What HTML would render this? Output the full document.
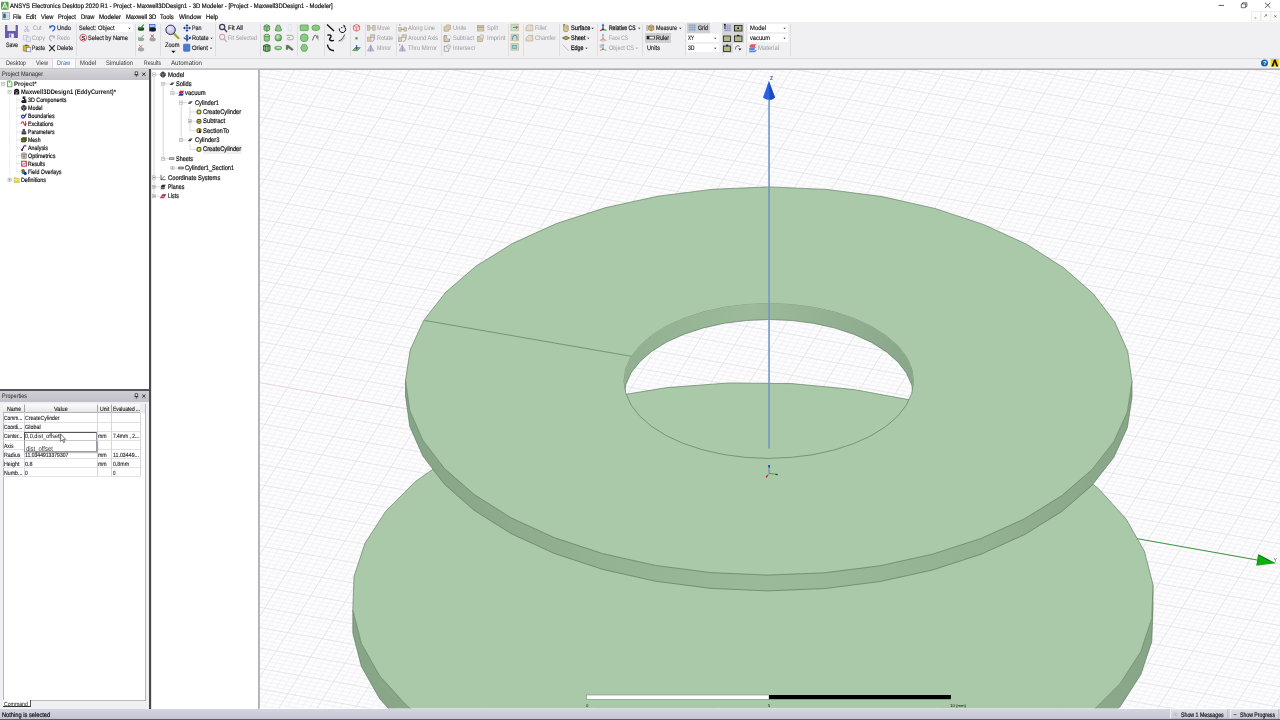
<!DOCTYPE html>
<html lang="en"><head><meta charset="utf-8"><title>ANSYS Electronics Desktop 2020 R1 - Project - Maxwell3DDesign1 - 3D Modeler</title>
<style>
html,body{margin:0;padding:0;}
body{width:1280px;height:720px;overflow:hidden;background:#fff;position:relative;font-family:"Liberation Sans", sans-serif;}
.t{position:absolute;transform-origin:0 50%;white-space:nowrap;text-rendering:geometricPrecision;line-height:12px;height:12px;font-family:"Liberation Sans", sans-serif;}
.b{position:absolute;box-sizing:border-box;}
svg{position:absolute;left:0;top:0;overflow:visible;}
</style></head><body>
<div class="b" style="left:0px;top:0px;width:1280px;height:21.5px;background:#ffffff;"></div>
<div class="b" style="left:0px;top:21.5px;width:1280px;height:37px;background:#f0f0f2;"></div>
<div class="b" style="left:0px;top:58px;width:1280px;height:0.8px;background:#dcdce0;"></div>
<div class="b" style="left:0px;top:58.8px;width:1280px;height:9.4px;background:#f1f1f3;"></div>
<div class="b" style="left:52px;top:58.5px;width:23.5px;height:9.5px;background:#fafafc;border-left:0.6px solid #dadade;border-right:0.6px solid #dadade;"></div>
<div class="b" style="left:0px;top:68px;width:1280px;height:1px;background:#c9c9cd;"></div>
<div class="b" style="left:76px;top:24px;width:0.7px;height:32px;background:#dedee2;"></div>
<div class="b" style="left:96.5px;top:23.5px;width:36px;height:8.8px;background:#fff;"></div>
<div class="b" style="left:134.5px;top:24px;width:0.7px;height:32px;background:#dedee2;"></div>
<div class="b" style="left:160px;top:24px;width:0.7px;height:32px;background:#dedee2;"></div>
<div class="b" style="left:215px;top:24px;width:0.7px;height:32px;background:#dedee2;"></div>
<div class="b" style="left:259.5px;top:24px;width:0.7px;height:32px;background:#dedee2;"></div>
<div class="b" style="left:297px;top:24px;width:0.7px;height:32px;background:#dedee2;"></div>
<div class="b" style="left:323.5px;top:24px;width:0.7px;height:32px;background:#dedee2;"></div>
<div class="b" style="left:350px;top:24px;width:0.7px;height:32px;background:#dedee2;"></div>
<div class="b" style="left:364.5px;top:24px;width:0.7px;height:32px;background:#dedee2;"></div>
<div class="b" style="left:396px;top:24px;width:0.7px;height:32px;background:#dedee2;"></div>
<div class="b" style="left:440.5px;top:24px;width:0.7px;height:32px;background:#dedee2;"></div>
<div class="b" style="left:507.5px;top:24px;width:0.7px;height:32px;background:#dedee2;"></div>
<div class="b" style="left:523px;top:24px;width:0.7px;height:32px;background:#dedee2;"></div>
<div class="b" style="left:559px;top:24px;width:0.7px;height:32px;background:#dedee2;"></div>
<div class="b" style="left:597px;top:24px;width:0.7px;height:32px;background:#dedee2;"></div>
<div class="b" style="left:642px;top:24px;width:0.7px;height:32px;background:#dedee2;"></div>
<div class="b" style="left:645px;top:33px;width:25.5px;height:10px;background:#cfcfd3;"></div>
<div class="b" style="left:684.5px;top:24px;width:0.7px;height:32px;background:#dedee2;"></div>
<div class="b" style="left:687px;top:23px;width:22.5px;height:10px;background:#cfcfd3;"></div>
<div class="b" style="left:687px;top:33.5px;width:31.5px;height:8.8px;background:#fff;"></div>
<div class="b" style="left:687px;top:43.5px;width:31.5px;height:8.8px;background:#fff;"></div>
<div class="b" style="left:721.5px;top:24px;width:0.7px;height:32px;background:#dedee2;"></div>
<div class="b" style="left:722px;top:23px;width:22.4px;height:19.6px;background:#d6d6da;"></div>
<div class="b" style="left:722px;top:42.6px;width:11px;height:10px;background:#d6d6da;"></div>
<div class="b" style="left:746px;top:24px;width:0.7px;height:32px;background:#dedee2;"></div>
<div class="b" style="left:748px;top:23.5px;width:39.5px;height:8.8px;background:#fff;"></div>
<div class="b" style="left:748px;top:33.5px;width:39.5px;height:8.8px;background:#fff;"></div>
<div class="b" style="left:790px;top:24px;width:0.7px;height:32px;background:#dedee2;"></div>
<div class="b" style="left:0px;top:69px;width:149px;height:10.5px;background:linear-gradient(#d6d6da,#c2c2c8);"></div>
<div class="b" style="left:0px;top:79.5px;width:149px;height:309.5px;background:#fff;"></div>
<div class="b" style="left:149px;top:69px;width:1.8px;height:640px;background:#4a4a4e;"></div>
<div class="b" style="left:150.8px;top:69px;width:1.2px;height:640px;background:#e4e4e8;"></div>
<div class="b" style="left:0px;top:389px;width:149px;height:1.6px;background:#55555a;"></div>
<div class="b" style="left:0px;top:390.6px;width:149px;height:11px;background:linear-gradient(#cfcfd5,#bfbfc7);"></div>
<div class="b" style="left:0px;top:401.6px;width:149px;height:307.4px;background:#f0f0f2;"></div>
<div class="b" style="left:3px;top:403.5px;width:143px;height:297px;background:#fff;border:0.7px solid #b8b8bc;"></div>
<div class="b" style="left:152px;top:69px;width:106px;height:640px;background:#fff;"></div>
<div class="b" style="left:257.6px;top:69px;width:1.4px;height:640px;background:#b4b4b8;"></div>
<div class="b" style="left:151.5px;top:68.8px;width:107px;height:1.7px;background:linear-gradient(#b4b4b8,#d8d8dc);"></div>
<div class="b" style="left:0px;top:708.5px;width:1280px;height:11.5px;background:linear-gradient(#d5d5e1,#c2c2d2);"></div>
<div class="b" style="left:0px;top:719px;width:1280px;height:1px;background:#5a5a66;"></div>
<div class="b" style="left:1170.4px;top:709.4px;width:57.4px;height:9.6px;background:linear-gradient(#dcdce6,#cdcddb);border:0.6px solid #bcbcca;border-left-color:#eeeef4;border-top-color:#e4e4ee;"></div>
<div class="b" style="left:1229.8px;top:709.4px;width:49.6px;height:9.6px;background:linear-gradient(#dcdce6,#cdcddb);border:0.6px solid #bcbcca;border-left-color:#eeeef4;border-top-color:#e4e4ee;"></div>
<div class="b" style="left:0px;top:700.5px;width:149px;height:8.2px;background:#f0f0f2;"></div>
<div class="b" style="left:2.6px;top:700.2px;width:28.2px;height:6.8px;background:#fff;border-bottom:0.8px solid #333;border-right:0.8px solid #555;"></div>
<div class="b" style="left:202.6px;top:144.78px;width:39.4px;height:8.8px;background:#f0f0f3;"></div>
<div class="b" style="left:3.4px;top:404.1px;width:137px;height:8.8px;background:linear-gradient(#fcfcfd,#e6e6ea);border-bottom:0.7px solid #b0b0b6;"></div>
<div class="b" style="left:3.4px;top:421.67px;width:137px;height:0.6px;background:#e2e2e6;"></div>
<div class="b" style="left:3.4px;top:430.74px;width:137px;height:0.6px;background:#e2e2e6;"></div>
<div class="b" style="left:3.4px;top:439.81px;width:137px;height:0.6px;background:#e2e2e6;"></div>
<div class="b" style="left:3.4px;top:448.88000000000005px;width:137px;height:0.6px;background:#e2e2e6;"></div>
<div class="b" style="left:3.4px;top:457.95000000000005px;width:137px;height:0.6px;background:#e2e2e6;"></div>
<div class="b" style="left:3.4px;top:467.02000000000004px;width:137px;height:0.6px;background:#e2e2e6;"></div>
<div class="b" style="left:3.4px;top:476.09000000000003px;width:137px;height:0.6px;background:#e2e2e6;"></div>
<div class="b" style="left:24.1px;top:404.1px;width:0.6px;height:72.29px;background:#d6d6da;"></div>
<div class="b" style="left:96.8px;top:404.1px;width:0.6px;height:72.29px;background:#d6d6da;"></div>
<div class="b" style="left:111.3px;top:404.1px;width:0.6px;height:72.29px;background:#d6d6da;"></div>
<div class="b" style="left:140.1px;top:404.1px;width:0.6px;height:72.29px;background:#d6d6da;"></div>
<div class="b" style="left:23.900000000000002px;top:404.6px;width:0.9px;height:7.800000000000001px;background:#a4a4aa;"></div>
<div class="b" style="left:96.6px;top:404.6px;width:0.9px;height:7.800000000000001px;background:#a4a4aa;"></div>
<div class="b" style="left:111.1px;top:404.6px;width:0.9px;height:7.800000000000001px;background:#a4a4aa;"></div>
<div class="b" style="left:140.4px;top:404.1px;width:5px;height:8.8px;background:#ececf0;"></div>
<div class="b" style="left:24.2px;top:432.1px;width:72.8px;height:8.5px;background:#fff;border:0.8px solid #55555a;border-right-color:#9a9aa0;border-bottom-color:#9a9aa0;"></div>
<div class="b" style="left:24.2px;top:440.4px;width:72.8px;height:11.8px;background:#fff;border:0.7px solid #9a9aa0;border-top:0.6px solid #c8c8cc;box-shadow:0.6px 0.8px 1.2px rgba(0,0,0,.3);"></div>
<div style="position:absolute;left:0;top:0;width:1280px;height:720px;will-change:transform;"><svg width="1280" height="720" viewBox="0 0 1280 720"><defs><clipPath id="vp"><rect x="259" y="69" width="1021" height="639.6"/></clipPath><clipPath id="hc"><path d="M631.2 356.8L640.0 345.6L651.9 335.3L666.7 326.1L684.1 318.3L703.5 312.0L724.5 307.3L746.6 304.6L769.3 303.6L791.9 304.6L814.0 307.5L834.9 312.2L854.3 318.6L871.5 326.5L886.2 335.8L898.0 346.1L906.6 357.4L911.8 369.2L913.5 381.3L911.7 393.4L906.3 405.2L897.5 416.4L885.6 426.7L870.8 435.9L853.4 443.7L834.0 450.0L813.0 454.7L790.9 457.4L768.2 458.4L745.6 457.4L723.5 454.5L702.6 449.8L683.2 443.4L666.0 435.5L651.3 426.2L639.5 415.9L630.9 404.6L625.7 392.8L624.0 380.7L625.8 368.6z"/></clipPath><clipPath id="hb"><path d="M631.2 372.7L640.0 361.5L651.9 351.2L666.7 342.0L684.1 334.2L703.5 327.9L724.5 323.2L746.6 320.5L769.3 319.5L791.9 320.5L814.0 323.4L834.9 328.1L854.3 334.5L871.5 342.4L886.2 351.7L898.0 362.0L906.6 373.3L911.8 385.1L913.5 397.2L911.7 409.3L906.3 421.1L897.5 432.3L885.6 442.6L870.8 451.8L853.4 459.6L834.0 465.9L813.0 470.6L790.9 473.3L768.2 474.3L745.6 473.3L723.5 470.4L702.6 465.7L683.2 459.3L666.0 451.4L651.3 442.1L639.5 431.8L630.9 420.5L625.7 408.7L624.0 396.6L625.8 384.5z"/></clipPath><linearGradient id="wg" x1="0" x2="1" y1="0" y2="0"><stop offset="0" stop-color="#86a486"/><stop offset="0.25" stop-color="#93b292"/><stop offset="0.5" stop-color="#9bba9a"/><stop offset="0.8" stop-color="#93b292"/><stop offset="1" stop-color="#87a587"/></linearGradient><linearGradient id="ig" x1="0" x2="1" y1="0" y2="0"><stop offset="0" stop-color="#8fae8f"/><stop offset="0.45" stop-color="#9cbb9b"/><stop offset="1" stop-color="#86a486"/></linearGradient></defs><g clip-path="url(#vp)"><rect x="259" y="69" width="1021" height="639.6" fill="#fdfdfe"/><path d="M259 -111.6L1280 70.2M259 -103.5L1280 78.3M259 -99.4L1280 82.4M259 -95.3L1280 86.5M259 -91.2L1280 90.6M259 -83.0L1280 98.8M259 -79.0L1280 102.8M259 -74.9L1280 106.9M259 -70.8L1280 111.0M259 -62.6L1280 119.2M259 -58.5L1280 123.3M259 -54.5L1280 127.3M259 -50.4L1280 131.4M259 -42.2L1280 139.6M259 -38.1L1280 143.7M259 -34.0L1280 147.8M259 -30.0L1280 151.8M259 -21.8L1280 160.0M259 -17.7L1280 164.1M259 -13.6L1280 168.2M259 -9.5L1280 172.3M259 -1.4L1280 180.4M259 2.7L1280 184.5M259 6.8L1280 188.6M259 10.9L1280 192.7M259 19.0L1280 200.8M259 23.1L1280 204.9M259 27.2L1280 209.0M259 31.3L1280 213.1M259 39.5L1280 221.3M259 43.5L1280 225.3M259 47.6L1280 229.4M259 51.7L1280 233.5M259 59.9L1280 241.7M259 64.0L1280 245.8M259 68.0L1280 249.8M259 72.1L1280 253.9M259 80.3L1280 262.1M259 84.4L1280 266.2M259 88.5L1280 270.3M259 92.5L1280 274.3M259 100.7L1280 282.5M259 104.8L1280 286.6M259 108.9L1280 290.7M259 113.0L1280 294.8M259 121.1L1280 302.9M259 125.2L1280 307.0M259 129.3L1280 311.1M259 133.4L1280 315.2M259 141.5L1280 323.3M259 145.6L1280 327.4M259 149.7L1280 331.5M259 153.8L1280 335.6M259 162.0L1280 343.8M259 166.0L1280 347.8M259 170.1L1280 351.9M259 174.2L1280 356.0M259 182.4L1280 364.2M259 186.5L1280 368.3M259 190.5L1280 372.3M259 194.6L1280 376.4M259 202.8L1280 384.6M259 206.9L1280 388.7M259 211.0L1280 392.8M259 215.0L1280 396.9M259 223.2L1280 405.0M259 227.3L1280 409.1M259 231.4L1280 413.2M259 235.5L1280 417.3M259 243.6L1280 425.4M259 247.7L1280 429.5M259 251.8L1280 433.6M259 255.9L1280 437.7M259 264.0L1280 445.9M259 268.1L1280 449.9M259 272.2L1280 454.0M259 276.3L1280 458.1M259 284.5L1280 466.3M259 288.5L1280 470.4M259 292.6L1280 474.4M259 296.7L1280 478.5M259 304.9L1280 486.7M259 309.0L1280 490.8M259 313.0L1280 494.9M259 317.1L1280 498.9M259 325.3L1280 507.1M259 329.4L1280 511.2M259 333.5L1280 515.3M259 337.6L1280 519.4M259 345.7L1280 527.5M259 349.8L1280 531.6M259 353.9L1280 535.7M259 358.0L1280 539.8M259 366.1L1280 547.9M259 370.2L1280 552.0M259 374.3L1280 556.1M259 378.4L1280 560.2M259 386.6L1280 568.4M259 390.6L1280 572.4M259 394.7L1280 576.5M259 398.8L1280 580.6M259 407.0L1280 588.8M259 411.1L1280 592.9M259 415.1L1280 596.9M259 419.2L1280 601.0M259 427.4L1280 609.2M259 431.5L1280 613.3M259 435.6L1280 617.4M259 439.6L1280 621.4M259 447.8L1280 629.6M259 451.9L1280 633.7M259 456.0L1280 637.8M259 460.1L1280 641.9M259 468.2L1280 650.0M259 472.3L1280 654.1M259 476.4L1280 658.2M259 480.5L1280 662.3M259 488.6L1280 670.4M259 492.7L1280 674.5M259 496.8L1280 678.6M259 500.9L1280 682.7M259 509.1L1280 690.9M259 513.1L1280 694.9M259 517.2L1280 699.0M259 521.3L1280 703.1M259 529.5L1280 711.3M259 533.6L1280 715.4M259 537.6L1280 719.4M259 541.7L1280 723.5M259 549.9L1280 731.7M259 554.0L1280 735.8M259 558.1L1280 739.9M259 562.1L1280 743.9M259 570.3L1280 752.1M259 574.4L1280 756.2M259 578.5L1280 760.3M259 582.6L1280 764.4M259 590.7L1280 772.5M259 594.8L1280 776.6M259 598.9L1280 780.7M259 603.0L1280 784.8M259 611.1L1280 792.9M259 615.2L1280 797.0M259 619.3L1280 801.1M259 623.4L1280 805.2M259 631.6L1280 813.4M259 635.6L1280 817.5M259 639.7L1280 821.5M259 643.8L1280 825.6M259 652.0L1280 833.8M259 656.1L1280 837.9M259 660.1L1280 842.0M259 664.2L1280 846.0M259 672.4L1280 854.2M259 676.5L1280 858.3M259 680.6L1280 862.4M259 684.6L1280 866.5M259 692.8L1280 874.6M259 696.9L1280 878.7M259 701.0L1280 882.8M259 705.1L1280 886.9M264.7 69L-134.2 708.6M272.3 69L-126.6 708.6M280.0 69L-118.9 708.6M287.6 69L-111.3 708.6M302.9 69L-96.0 708.6M310.5 69L-88.3 708.6M318.2 69L-80.7 708.6M325.8 69L-73.1 708.6M341.1 69L-57.8 708.6M348.7 69L-50.1 708.6M356.4 69L-42.5 708.6M364.0 69L-34.8 708.6M379.3 69L-19.6 708.6M387.0 69L-11.9 708.6M394.6 69L-4.3 708.6M402.2 69L3.4 708.6M417.5 69L18.6 708.6M425.2 69L26.3 708.6M432.8 69L33.9 708.6M440.4 69L41.6 708.6M455.7 69L56.9 708.6M463.4 69L64.5 708.6M471.0 69L72.1 708.6M478.7 69L79.8 708.6M493.9 69L95.1 708.6M501.6 69L102.7 708.6M509.2 69L110.3 708.6M516.9 69L118.0 708.6M532.1 69L133.3 708.6M539.8 69L140.9 708.6M547.4 69L148.6 708.6M555.1 69L156.2 708.6M570.4 69L171.5 708.6M578.0 69L179.1 708.6M585.6 69L186.8 708.6M593.3 69L194.4 708.6M608.6 69L209.7 708.6M616.2 69L217.3 708.6M623.9 69L225.0 708.6M631.5 69L232.6 708.6M646.8 69L247.9 708.6M654.4 69L255.5 708.6M662.1 69L263.2 708.6M669.7 69L270.8 708.6M685.0 69L286.1 708.6M692.6 69L293.8 708.6M700.3 69L301.4 708.6M707.9 69L309.0 708.6M723.2 69L324.3 708.6M730.8 69L332.0 708.6M738.5 69L339.6 708.6M746.1 69L347.2 708.6M761.4 69L362.5 708.6M769.0 69L370.2 708.6M776.7 69L377.8 708.6M784.3 69L385.5 708.6M799.6 69L400.7 708.6M807.3 69L408.4 708.6M814.9 69L416.0 708.6M822.5 69L423.7 708.6M837.8 69L439.0 708.6M845.5 69L446.6 708.6M853.1 69L454.2 708.6M860.8 69L461.9 708.6M876.0 69L477.2 708.6M883.7 69L484.8 708.6M891.3 69L492.4 708.6M899.0 69L500.1 708.6M914.2 69L515.4 708.6M921.9 69L523.0 708.6M929.5 69L530.7 708.6M937.2 69L538.3 708.6M952.5 69L553.6 708.6M960.1 69L561.2 708.6M967.7 69L568.9 708.6M975.4 69L576.5 708.6M990.7 69L591.8 708.6M998.3 69L599.4 708.6M1005.9 69L607.1 708.6M1013.6 69L614.7 708.6M1028.9 69L630.0 708.6M1036.5 69L637.6 708.6M1044.2 69L645.3 708.6M1051.8 69L652.9 708.6M1067.1 69L668.2 708.6M1074.7 69L675.9 708.6M1082.4 69L683.5 708.6M1090.0 69L691.1 708.6M1105.3 69L706.4 708.6M1112.9 69L714.1 708.6M1120.6 69L721.7 708.6M1128.2 69L729.3 708.6M1143.5 69L744.6 708.6M1151.1 69L752.3 708.6M1158.8 69L759.9 708.6M1166.4 69L767.6 708.6M1181.7 69L782.8 708.6M1189.4 69L790.5 708.6M1197.0 69L798.1 708.6M1204.6 69L805.8 708.6M1219.9 69L821.1 708.6M1227.6 69L828.7 708.6M1235.2 69L836.3 708.6M1242.8 69L844.0 708.6M1258.1 69L859.3 708.6M1265.8 69L866.9 708.6M1273.4 69L874.5 708.6M1281.1 69L882.2 708.6M1296.3 69L897.5 708.6M1304.0 69L905.1 708.6M1311.6 69L912.8 708.6M1319.3 69L920.4 708.6M1334.6 69L935.7 708.6M1342.2 69L943.3 708.6M1349.8 69L951.0 708.6M1357.5 69L958.6 708.6M1372.8 69L973.9 708.6M1380.4 69L981.5 708.6M1388.0 69L989.2 708.6M1395.7 69L996.8 708.6M1411.0 69L1012.1 708.6M1418.6 69L1019.7 708.6M1426.3 69L1027.4 708.6M1433.9 69L1035.0 708.6M1449.2 69L1050.3 708.6M1456.8 69L1058.0 708.6M1464.5 69L1065.6 708.6M1472.1 69L1073.2 708.6M1487.4 69L1088.5 708.6M1495.0 69L1096.2 708.6M1502.7 69L1103.8 708.6M1510.3 69L1111.4 708.6M1525.6 69L1126.7 708.6M1533.2 69L1134.4 708.6M1540.9 69L1142.0 708.6M1548.5 69L1149.7 708.6M1563.8 69L1164.9 708.6M1571.5 69L1172.6 708.6M1579.1 69L1180.2 708.6M1586.7 69L1187.9 708.6M1602.0 69L1203.1 708.6M1609.7 69L1210.8 708.6M1617.3 69L1218.4 708.6M1624.9 69L1226.1 708.6M1640.2 69L1241.4 708.6M1647.9 69L1249.0 708.6M1655.5 69L1256.6 708.6M1663.2 69L1264.3 708.6M1678.4 69L1279.6 708.6" stroke="#eeeef3" stroke-width="0.7" fill="none"/><path d="M259 -107.6L1280 74.3M259 -87.1L1280 94.7M259 -66.7L1280 115.1M259 -46.3L1280 135.5M259 -25.9L1280 155.9M259 -5.5L1280 176.3M259 15.0L1280 196.8M259 35.4L1280 217.2M259 55.8L1280 237.6M259 76.2L1280 258.0M259 96.6L1280 278.4M259 117.0L1280 298.8M259 137.5L1280 319.3M259 157.9L1280 339.7M259 178.3L1280 360.1M259 198.7L1280 380.5M259 219.1L1280 400.9M259 239.5L1280 421.4M259 260.0L1280 441.8M259 280.4L1280 462.2M259 300.8L1280 482.6M259 321.2L1280 503.0M259 341.6L1280 523.4M259 362.1L1280 543.9M259 382.5L1280 564.3M259 402.9L1280 584.7M259 423.3L1280 605.1M259 443.7L1280 625.5M259 464.1L1280 645.9M259 484.6L1280 666.4M259 505.0L1280 686.8M259 525.4L1280 707.2M259 545.8L1280 727.6M259 566.2L1280 748.0M259 586.6L1280 768.4M259 607.1L1280 788.9M259 627.5L1280 809.3M259 647.9L1280 829.7M259 668.3L1280 850.1M259 688.7L1280 870.5M295.2 69L-103.6 708.6M333.5 69L-65.4 708.6M371.7 69L-27.2 708.6M409.9 69L11.0 708.6M448.1 69L49.2 708.6M486.3 69L87.4 708.6M524.5 69L125.6 708.6M562.7 69L163.8 708.6M600.9 69L202.1 708.6M639.1 69L240.3 708.6M677.3 69L278.5 708.6M715.6 69L316.7 708.6M753.8 69L354.9 708.6M792.0 69L393.1 708.6M830.2 69L431.3 708.6M868.4 69L469.5 708.6M906.6 69L507.7 708.6M944.8 69L545.9 708.6M983.0 69L584.2 708.6M1021.2 69L622.4 708.6M1059.4 69L660.6 708.6M1097.7 69L698.8 708.6M1135.9 69L737.0 708.6M1174.1 69L775.2 708.6M1212.3 69L813.4 708.6M1250.5 69L851.6 708.6M1288.7 69L889.8 708.6M1326.9 69L928.0 708.6M1365.1 69L966.2 708.6M1403.3 69L1004.5 708.6M1441.5 69L1042.7 708.6M1479.8 69L1080.9 708.6M1518.0 69L1119.1 708.6M1556.2 69L1157.3 708.6M1594.4 69L1195.5 708.6M1632.6 69L1233.7 708.6M1670.8 69L1271.9 708.6" stroke="#dfdfe6" stroke-width="0.8" fill="none"/><path d="M218.8 375.3L769.1 473.3" stroke="#f3d3d9" stroke-width="0.8"/><path d="M769.1 473.3L1257 559.95" stroke="#2c8a2c" stroke-width="0.9"/><path d="M1258.3 554.2L1275.7 563.3L1256.4 565.7z" fill="#12ac14"/><path d="M1258.3 554.2L1275.7 563.3L1268 560.6L1258.6 555.6z" fill="#0a7a0c"/><path d="M1258.3 554.2L1258.9 560L1256.4 565.7z" fill="#0e9410"/><text x="1273.8" y="561.6" font-size="4.6" fill="#3a4a3a" font-family='"Liberation Sans", sans-serif'>Y</text><path d="M352.8 633.1L361.4 666.5L379.7 698.8L407.2 729.1L443.2 756.8L486.8 781.0L537.0 801.4L592.4 817.3L651.9 828.3L713.8 834.2L776.7 834.9L839.0 830.2L899.1 820.4L955.7 805.7L1007.3 786.4L1052.6 763.0L1090.6 736.1L1120.2 706.4L1140.8 674.6L1151.8 641.4L1153.0 607.7L1153.0 584.7L1151.8 618.4L1140.8 651.6L1120.2 683.4L1090.6 713.1L1052.6 740.0L1007.3 763.4L955.7 782.7L899.1 797.4L839.0 807.2L776.7 811.9L713.8 811.2L651.9 805.3L592.4 794.3L537.0 778.4L486.8 758.0L443.2 733.8L407.2 706.1L379.7 675.8L361.4 643.5L352.8 610.1z" fill="url(#wg)"/><path d="M352.8 610.1L352.8 633.1L361.4 666.5L379.7 698.8L407.2 729.1L443.2 756.8L486.8 781.0L537.0 801.4L592.4 817.3L651.9 828.3L713.8 834.2L776.7 834.9L839.0 830.2L899.1 820.4L955.7 805.7L1007.3 786.4L1052.6 763.0L1090.6 736.1L1120.2 706.4L1140.8 674.6L1151.8 641.4L1153.0 607.7V584.7" fill="none" stroke="#557055" stroke-width="0.6"/><path d="M352.8 610.1L354.0 576.4L365.0 543.2L385.6 511.4L415.2 481.7L453.2 454.8L498.5 431.4L550.1 412.1L606.7 397.4L666.8 387.6L729.1 382.9L792.0 383.6L853.9 389.5L913.4 400.5L968.8 416.4L1019.0 436.8L1062.6 461.0L1098.6 488.7L1126.1 519.0L1144.4 551.3L1153.0 584.7L1151.8 618.4L1140.8 651.6L1120.2 683.4L1090.6 713.1L1052.6 740.0L1007.3 763.4L955.7 782.7L899.1 797.4L839.0 807.2L776.7 811.9L713.8 811.2L651.9 805.3L592.4 794.3L537.0 778.4L486.8 758.0L443.2 733.8L407.2 706.1L379.7 675.8L361.4 643.5z" fill="#a9c9a9" stroke="#557055" stroke-width="0.6"/><path d="M405.5 396.1L409.8 426.5L422.9 456.1L444.5 484.3L474.2 510.3L511.0 533.6L554.2 553.4L602.7 569.4L655.3 581.2L710.7 588.4L767.5 590.9L824.3 588.6L879.8 581.6L932.5 570.0L981.2 554.2L1024.7 534.5L1061.9 511.4L1091.8 485.5L1113.8 457.4L1127.3 427.8L1132.0 397.5L1132.0 381.7L1127.3 412.0L1113.8 441.6L1091.8 469.7L1061.9 495.6L1024.7 518.7L981.2 538.4L932.5 554.2L879.8 565.8L824.3 572.8L767.5 575.1L710.7 572.6L655.3 565.4L602.7 553.6L554.2 537.6L511.0 517.8L474.2 494.5L444.5 468.5L422.9 440.3L409.8 410.7L405.5 380.3z" fill="url(#wg)"/><path d="M405.5 380.3L405.5 396.1L409.8 426.5L422.9 456.1L444.5 484.3L474.2 510.3L511.0 533.6L554.2 553.4L602.7 569.4L655.3 581.2L710.7 588.4L767.5 590.9L824.3 588.6L879.8 581.6L932.5 570.0L981.2 554.2L1024.7 534.5L1061.9 511.4L1091.8 485.5L1113.8 457.4L1127.3 427.8L1132.0 397.5V381.7" fill="none" stroke="#557055" stroke-width="0.6"/><path d="M423.7 320.4L445.7 292.3L475.6 266.4L512.8 243.3L556.3 223.6L605.0 207.8L657.7 196.2L713.2 189.2L770.0 186.9L826.8 189.4L882.2 196.6L934.8 208.4L983.3 224.4L1026.5 244.2L1063.3 267.5L1093.0 293.5L1114.6 321.7L1127.7 351.3L1132.0 381.7L1127.3 412.0L1113.8 441.6L1091.8 469.7L1061.9 495.6L1024.7 518.7L981.2 538.4L932.5 554.2L879.8 565.8L824.3 572.8L767.5 575.1L710.7 572.6L655.3 565.4L602.7 553.6L554.2 537.6L511.0 517.8L474.2 494.5L444.5 468.5L422.9 440.3L409.8 410.7L405.5 380.3L410.2 350.0zM631.2 356.8L640.0 345.6L651.9 335.3L666.7 326.1L684.1 318.3L703.5 312.0L724.5 307.3L746.6 304.6L769.3 303.6L791.9 304.6L814.0 307.5L834.9 312.2L854.3 318.6L871.5 326.5L886.2 335.8L898.0 346.1L906.6 357.4L911.8 369.2L913.5 381.3L911.7 393.4L906.3 405.2L897.5 416.4L885.6 426.7L870.8 435.9L853.4 443.7L834.0 450.0L813.0 454.7L790.9 457.4L768.2 458.4L745.6 457.4L723.5 454.5L702.6 449.8L683.2 443.4L666.0 435.5L651.3 426.2L639.5 415.9L630.9 404.6L625.7 392.8L624.0 380.7L625.8 368.6z" fill="#a9c9a9" fill-rule="evenodd" stroke="#557055" stroke-width="0.6"/><g clip-path="url(#hc)"><path d="M600 280H940V480H600zM631.2 372.7L640.0 361.5L651.9 351.2L666.7 342.0L684.1 334.2L703.5 327.9L724.5 323.2L746.6 320.5L769.3 319.5L791.9 320.5L814.0 323.4L834.9 328.1L854.3 334.5L871.5 342.4L886.2 351.7L898.0 362.0L906.6 373.3L911.8 385.1L913.5 397.2L911.7 409.3L906.3 421.1L897.5 432.3L885.6 442.6L870.8 451.8L853.4 459.6L834.0 465.9L813.0 470.6L790.9 473.3L768.2 474.3L745.6 473.3L723.5 470.4L702.6 465.7L683.2 459.3L666.0 451.4L651.3 442.1L639.5 431.8L630.9 420.5L625.7 408.7L624.0 396.6L625.8 384.5z" fill="url(#ig)" fill-rule="evenodd" stroke="#557055" stroke-width="0.6"/></g><path d="M424.4 320.4L631.3 356.3" stroke="#557055" stroke-width="0.6"/><path d="M769.05 99V448.6" stroke="#7097c9" stroke-width="1.6"/><path d="M768.85 81L775 97.5Q768.75 102 763 97.5z" fill="#2b62e0"/><path d="M768.85 81L775 97.5Q772 100 769.75 100z" fill="#1d49c0"/><text x="770" y="79.5" font-size="5" fill="#2a55c8" font-weight="700" font-family='"Liberation Sans", sans-serif'>Z</text><path d="M769.1 473.3V467" stroke="#6f8fd0" stroke-width="1.3"/><path d="M769.1 467.6V465" stroke="#1a2ab8" stroke-width="1.5"/><path d="M769.1 473.3L776 474.3" stroke="#3f9a4f" stroke-width="0.9"/><path d="M775.6 474.3L777.8 474.6" stroke="#0a5a1a" stroke-width="1.3"/><path d="M769.1 473.3L767.3 475.8" stroke="#c86a5a" stroke-width="1"/><path d="M767.6 475.4L766.2 477.4" stroke="#d81818" stroke-width="1.5"/><rect x="586.5" y="695" width="182.5" height="4.4" fill="#fff" stroke="#7a8a7a" stroke-width="0.6"/><rect x="769" y="695" width="181.9" height="4.2" fill="#000"/><text x="586" y="706.7" font-size="4.3" fill="#111" font-family='"Liberation Sans", sans-serif'>0</text><text x="767.8" y="706.7" font-size="4.3" fill="#111" font-family='"Liberation Sans", sans-serif'>5</text><text x="950" y="706.7" font-size="4.3" fill="#111" font-family='"Liberation Sans", sans-serif'>10 (mm)</text></g><path d="M259.3 708.6V69.4H1280" stroke="#a8a8ac" stroke-width="1" fill="none"/></svg></div>
<div style="position:absolute;left:0;top:0;width:1280px;height:720px;will-change:transform;"><svg width="1280" height="720" viewBox="0 0 1280 720"><defs><radialGradient id="sph" cx="0.4" cy="0.35" r="0.7"><stop offset="0" stop-color="#c8f0c0"/><stop offset="1" stop-color="#4a9a48"/></radialGradient><radialGradient id="lens" cx="0.4" cy="0.35" r="0.7"><stop offset="0" stop-color="#eeeefa"/><stop offset="1" stop-color="#b4b4dc"/></radialGradient></defs><rect x="1" y="1.8" width="7.6" height="8" rx="0.8" fill="#59a246"/><path d="M2.2 8.8L4.8 3L7.4 8.8M3.4 7H6.2" stroke="#e4f2dc" stroke-width="1.1" fill="none"/><rect x="2.3" y="12.6" width="7.2" height="7" fill="#e8eef4" stroke="#7a8a9a" stroke-width="0.6"/><rect x="3.2" y="13.6" width="2.6" height="4.6" fill="#2a6a7a"/><rect x="6.4" y="13.6" width="2.2" height="4.6" fill="#c8d4dc"/><path d="M1218.5 5.4H1224" stroke="#333" stroke-width="0.8"/><path d="M1241.3 4H1245.6V7.7H1241.3zM1242.6 4V2.8H1246.9V6.5H1245.6" stroke="#333" stroke-width="0.7" fill="none"/><path d="M1265 2.7L1270.4 7.8M1270.4 2.7L1265 7.8" stroke="#333" stroke-width="0.8"/><rect x="1251.5" y="11.6" width="9" height="9.4" fill="#fcfcfc" stroke="#e6e6e8" stroke-width="0.6"/><rect x="1261.2" y="11.6" width="9" height="9.4" fill="#fcfcfc" stroke="#e6e6e8" stroke-width="0.6"/><rect x="1270.9" y="11.6" width="9" height="9.4" fill="#fcfcfc" stroke="#e6e6e8" stroke-width="0.6"/><path d="M1254.5 18H1256.3" stroke="#666" stroke-width="0.8"/><path d="M1264.2 17L1266.5 14.8M1265.2 14.8H1266.6V16.2" stroke="#666" stroke-width="0.7" fill="none"/><path d="M1274.2 15.2L1276.4 17.4M1276.4 15.2L1274.2 17.4" stroke="#666" stroke-width="0.7"/><circle cx="1264.5" cy="62.9" r="3.5" fill="#1c62aa"/><text x="1262.9" y="65.1" font-size="6" font-weight="700" fill="#fff" font-family='"Liberation Sans", sans-serif'>?</text><rect x="1270.6" y="59" width="8.2" height="7.6" fill="#f6d400"/><path d="M1271.4 66.4L1274 59.4H1275.6L1278.2 66.4H1276.2L1274.8 62L1273.4 66.4z" fill="#111"/><path d="M5 25H7.6V31H15.4V25H17.9V37.9H5z" fill="#6b5baa"/><rect x="7.6" y="25" width="7.8" height="6" fill="#ebebf1"/><rect x="8.9" y="33.7" width="5" height="4.2" fill="#f2f2f6"/><rect x="9.6" y="34.4" width="1.6" height="2.8" fill="#6b5baa"/><path d="M25 25.8L27.8 30M28.2 25.8L25.6 30" stroke="#aab4cc" stroke-width="0.8"/><circle cx="25.3" cy="30.6" r="1" fill="none" stroke="#a4aed0" stroke-width="0.7"/><circle cx="28.2" cy="30.6" r="1" fill="none" stroke="#a4aed0" stroke-width="0.7"/><rect x="23.6" y="35.3" width="4" height="4.6" fill="#eef0f6" stroke="#b4bcd0" stroke-width="0.6"/><rect x="26.2" y="36.9" width="4" height="4.4" fill="#e6eaf4" stroke="#a8b2cc" stroke-width="0.6"/><rect x="23.3" y="45.4" width="5.8" height="5.8" rx="0.6" fill="#e2b02c" stroke="#8a6a14" stroke-width="0.6"/><rect x="25" y="44.7" width="2.6" height="1.4" fill="#5a5a5a"/><rect x="26.6" y="47.6" width="4.2" height="4.2" fill="#eef2fa" stroke="#6a7a9a" stroke-width="0.6"/><path d="M50.2 27.2C52 24.8 55 25.6 54.8 28.2C54.7 29.8 53.6 30.6 52.4 31" stroke="#2d6bc8" stroke-width="1.4" fill="none"/><path d="M49 25.6L52.2 26.2L49.8 28.9z" fill="#2d6bc8"/><path d="M54 37.2C52.2 34.8 49.2 35.6 49.4 38.2C49.5 39.8 50.6 40.6 51.8 41" stroke="#a9b6d2" stroke-width="1.3" fill="none"/><path d="M55.2 35.6L52 36.2L54.4 38.9z" fill="#a9b6d2"/><path d="M49.2 45.2L54.8 51.2M54.8 45.2L49.2 51.2" stroke="#222" stroke-width="1.1"/><circle cx="83.2" cy="37.7" r="3.4" fill="#fff" stroke="#e0405a" stroke-width="0.9"/><text x="81.35" y="39.95" font-size="6.2" font-weight="700" fill="#111" font-family='"Liberation Sans", sans-serif'>S</text><ellipse cx="141" cy="28.900000000000002" rx="3.2" ry="1.9" fill="#1e4a24"/><path d="M138.4 26.6L140.3 28.4L143.8 24.6" stroke="#2e9a3a" stroke-width="1.3" fill="none"/><rect x="149" y="24" width="6.4" height="7.4" fill="#3a6ac8"/><rect x="149.8" y="24.8" width="4.8" height="2.2" fill="#a8c4f0"/><ellipse cx="152.8" cy="29.5" rx="3.2" ry="1.9" fill="#1a1a20"/><ellipse cx="141" cy="39.3" rx="3.2" ry="1.9" fill="#9aa89c"/><path d="M138.4 37L140.3 38.8L143.8 35" stroke="#7ac088" stroke-width="1.1" fill="none"/><ellipse cx="152.6" cy="39.5" rx="3.2" ry="1.9" fill="#a0a4a0"/><path d="M150.6 34.6L154 37.6M154 34.6L150.6 37.6" stroke="#e04a5a" stroke-width="1"/><ellipse cx="141" cy="49.5" rx="3.2" ry="1.9" fill="#a4a6a4"/><path d="M139 45L142.6 48.2M142.6 45L139 48.2" stroke="#c88a94" stroke-width="1"/><path d="M174 33.6L178.6 38.2" stroke="#a6b830" stroke-width="2.2" stroke-linecap="round"/><path d="M174 33.6L178.6 38.2" stroke="#5a6a10" stroke-width="0.5"/><circle cx="170.6" cy="29.8" r="4.7" fill="url(#lens)" stroke="#2a2a5a" stroke-width="1"/><path d="M187 25.4V30.6M184.4 28H189.6" stroke="#2a52b0" stroke-width="1"/><path d="M187 23.9L188.5 26H185.5zM187 32.1L188.5 30H185.5zM182.9 28L185 26.5V29.5zM191.1 28L189 26.5V29.5z" fill="#1a3484"/><path d="M187 34.6L188.8 36.6H185.2z" fill="#1e3a8a"/><rect x="186.2" y="36" width="1.6" height="5.4" fill="#2a52b0"/><path d="M183.8 37.4C185 39.8 189 39.8 190.2 37.8" stroke="#1e3a8a" stroke-width="1.1" fill="none"/><path d="M190.9 36.4L190.6 39.2L188.6 37.6z" fill="#1e3a8a"/><rect x="183.6" y="44.2" width="6.2" height="7" rx="0.5" fill="#4a7ad4" stroke="#2a52a8" stroke-width="0.6"/><circle cx="222.2" cy="27" r="2.6" fill="#e4e4f0" stroke="#3a3a52" stroke-width="1.2"/><path d="M224.2 29L226.6 31.6" stroke="#4a4a5a" stroke-width="1.5" stroke-linecap="round"/><circle cx="222.2" cy="37" r="2.6" fill="#f6eef2" stroke="#d4a4b4" stroke-width="1.1"/><path d="M224.2 39L226.6 41.6" stroke="#c0b4bc" stroke-width="1.4" stroke-linecap="round"/><path d="M264 26L266.8 24.6L269.6 26V30L266.8 31.4L264 30z" fill="#8acb84" stroke="#2d6a2c" stroke-width="0.6"/><path d="M264 26L266.8 27.2L269.6 26M266.8 27.2V31.4" stroke="#2d6a2c" stroke-width="0.5" fill="none"/><path d="M264.2 35.4V40.2A2.6 1.1 0 0 0 269.4 40.2V35.4z" fill="#8acb84" stroke="#2d6a2c" stroke-width="0.6"/><ellipse cx="266.8" cy="35.4" rx="2.6" ry="1.1" fill="#b4e4ae" stroke="#2d6a2c" stroke-width="0.6"/><path d="M263.6 45.6L266.8 44.4L270 45.6V50.6L266.8 51.6L263.6 50.6z" fill="#8acb84" stroke="#1c3a1c" stroke-width="0.8"/><path d="M265.6 46V51M268 46V51M263.6 45.6L266.8 46.4L270 45.6" stroke="#1c3a1c" stroke-width="0.6" fill="none"/><path d="M277 25.2H279.6L281.6 30.2A3.4 1.2 0 0 1 275 30.2z" fill="#8acb84" stroke="#2d6a2c" stroke-width="0.6"/><circle cx="278.3" cy="37.7" r="3.4" fill="url(#sph)" stroke="#3a7a38" stroke-width="0.5"/><ellipse cx="278.2" cy="48" rx="3.6" ry="1.9" fill="#8acb84" stroke="#4a8a48" stroke-width="0.6"/><ellipse cx="278.4" cy="47.6" rx="1.5" ry="0.6" fill="#dfeedd"/><rect x="288.4" y="24.6" width="2.8" height="6.4" fill="none" stroke="#c4d4ec" stroke-width="0.6" stroke-dasharray="1 0.8"/><path d="M286.6 35.4H291.2A2 2 0 0 1 291.2 39.8H288.6A1 1 0 0 1 288.6 37.6H290" stroke="#a4aaa4" stroke-width="1" fill="none"/><path d="M286.2 45.2H288.4L293.4 49.4L292 50.6L287.8 47.4V49.4H286.2z" fill="#5a7a58" stroke="#3a4a3a" stroke-width="0.4"/><rect x="300.2" y="25" width="8" height="5.6" rx="0.5" fill="#8acb84" stroke="#4a9a48" stroke-width="0.7"/><ellipse cx="315.8" cy="27.8" rx="4" ry="2.8" fill="#8acb84" stroke="#4a9a48" stroke-width="0.7"/><circle cx="304.2" cy="37.8" r="3.9" fill="#8acb84" stroke="#4a9a48" stroke-width="0.7"/><path d="M300.6 47.9L302.4 44.6H306L307.8 47.9L306 51.2H302.4z" fill="#8acb84" stroke="#4a9a48" stroke-width="0.7"/><path d="M312.4 40.4C313.6 38 314 35.2 315.4 35.2C316.4 35.2 316.6 37 317 38.4" stroke="#4a4a4a" stroke-width="0.9" fill="none"/><path d="M316.4 35.6H318.4V41.2z" fill="#7a8a7a"/><path d="M327 24.6L334 31" stroke="#111" stroke-width="1.3"/><path d="M339.4 28.4A3.2 3.2 0 1 0 344.8 27.2" stroke="#111" stroke-width="1" fill="none"/><path d="M343.4 24.4L345.6 26.2L343.8 27.6z" fill="#111"/><circle cx="341.8" cy="27.6" r="0.7" fill="#111"/><path d="M327.4 35.2C332 34 331.4 37 330 38.2C328.8 39.4 330 41.4 334 40.4" stroke="#111" stroke-width="1.4" fill="none"/><path d="M338.6 41C341.4 40.4 343.4 37.8 344.6 34.6" stroke="#333" stroke-width="0.9" fill="none"/><path d="M340 41.4C342.4 40.6 343.6 39.4 344.8 37.6" stroke="#888" stroke-width="0.6" fill="none"/><path d="M327.4 44.6C328 48 330 50.4 334 50.8" stroke="#111" stroke-width="1.4" fill="none"/><path d="M353.4 26L356.4 24.4L359.6 26V29.6L356.4 31.2L353.4 29.6z" fill="#f6dcdc" stroke="#d4545c" stroke-width="0.8"/><path d="M353.4 26L356.4 27.4L359.6 26M356.4 27.4V31.2" stroke="#d4545c" stroke-width="0.6" fill="none"/><rect x="355.4" y="37.2" width="2.2" height="2.2" fill="#3aa23a"/><path d="M352.6 50.6L355.4 47.6H360.4L357.6 50.6z" fill="#6ab85a" stroke="#2a6a2a" stroke-width="0.5"/><path d="M356.6 45V48.4" stroke="#2a4ac8" stroke-width="1"/><path d="M355.4 47.6L356.6 49.4L357.8 47.6z" fill="#2a4ac8"/><rect x="367.4" y="25.4" width="2.4" height="5" fill="#d6cbb0" stroke="#b0a488" stroke-width="0.6"/><rect x="372.8" y="25.4" width="2.4" height="5" fill="#d6cbb0" stroke="#b0a488" stroke-width="0.6"/><path d="M369.8 27.9H372.8" stroke="#8a8a9a" stroke-width="0.8"/><rect x="367.4" y="37.2" width="3.6" height="4" fill="#d6cbb0" stroke="#b0a488" stroke-width="0.6"/><rect x="370.6" y="34.8" width="4.2" height="2.6" fill="#d6cbb0" stroke="#b0a488" stroke-width="0.6"/><path d="M374.4 37.6C374.6 40 373 41.4 371.4 41.4" stroke="#7a7ad8" stroke-width="0.8" fill="none"/><path d="M367.4 51L370.6 45.2L374 51z" fill="#c4bcd0" stroke="#a49cb0" stroke-width="0.6"/><path d="M370.7 44.4V51.4" stroke="#8a84a0" stroke-width="0.6"/><rect x="398.8" y="27.4" width="2.4" height="3.8" fill="#d6cbb0" stroke="#b0a488" stroke-width="0.6"/><rect x="404" y="27.4" width="2.6" height="3.8" fill="#d6cbb0" stroke="#b0a488" stroke-width="0.6"/><path d="M401.2 29.3H404" stroke="#4aa04a" stroke-width="0.8"/><rect x="399.2" y="24.4" width="1.2" height="1.2" fill="#8a8a8a"/><rect x="398.8" y="37.6" width="3" height="4" fill="#d6cbb0" stroke="#b0a488" stroke-width="0.6"/><rect x="402" y="34.8" width="4.4" height="2.6" fill="#d6cbb0" stroke="#b0a488" stroke-width="0.6"/><path d="M406 37.6C406.2 40 404.6 41.4 403 41.4" stroke="#7a7ad8" stroke-width="0.8" fill="none"/><path d="M398.8 34.6V42" stroke="#8a8a8a" stroke-width="0.5" stroke-dasharray="1 0.6"/><path d="M399 51L402.2 45.4L405.6 51z" fill="#c4bcd0" stroke="#a49cb0" stroke-width="0.6"/><path d="M402.3 44.4V51.4" stroke="#8a84a0" stroke-width="0.6"/><rect x="399" y="44.4" width="1.1" height="1.1" fill="#8a8a8a"/><path d="M444 26.8H446V25.4Q448.4 24 450.6 25.4V29.4H448.6V31.2H444z" fill="#d6cbb0" stroke="#b0a488" stroke-width="0.7"/><path d="M444 35.6H446.4Q446 38.6 449.4 39V41.6H444z" fill="#d6cbb0" stroke="#8a8070" stroke-width="0.7"/><circle cx="448.8" cy="37" r="2" fill="#f4f4f6" stroke="#c0c0c8" stroke-width="0.5"/><rect x="444.2" y="46.2" width="4.6" height="5" fill="#f2f2f4" stroke="#8a8a92" stroke-width="0.7"/><circle cx="448.6" cy="46.8" r="2.1" fill="#e0dcd4" stroke="#a8a8b0" stroke-width="0.6"/><rect x="477.4" y="25.6" width="6.4" height="5.4" fill="#d6cbb0" stroke="#b0a488" stroke-width="0.7"/><path d="M477.4 27.2H483.8" stroke="#8a8272" stroke-width="0.7"/><rect x="477.4" y="36.4" width="5" height="5" fill="#d6cbb0" stroke="#b0a488" stroke-width="0.7"/><circle cx="481.8" cy="36.8" r="2.1" fill="#e6e0d4" stroke="#a8a090" stroke-width="0.6"/><rect x="511" y="24.2" width="7.4" height="6.6" fill="#bfe6c0" stroke="#d8b48a" stroke-width="0.8"/><rect x="511" y="34.2" width="7.4" height="6.6" fill="#bfe6c0" stroke="#d8b48a" stroke-width="0.8"/><rect x="511" y="43.6" width="7.4" height="6.6" fill="#bfe6c0" stroke="#d8b48a" stroke-width="0.8"/><path d="M513 27.4H517.4M516 26.2L517.6 27.4L516 28.6" stroke="#2a52c8" stroke-width="0.7" fill="none"/><path d="M512.6 39.6V37.6A2.2 2.2 0 0 1 517 37.6V39.6" stroke="#3a6ab8" stroke-width="0.8" fill="none"/><rect x="512.6" y="45.2" width="4.2" height="3.4" fill="#9ad0c8" stroke="#3a8ab8" stroke-width="0.5"/><path d="M526 30.8V27.4Q526.4 25.2 528.6 25H532.8V30.8z" fill="#e4dccc" stroke="#b8a890" stroke-width="0.7"/><path d="M526 41V38L528.8 35.2H532.8V41z" fill="#e4dccc" stroke="#b8a890" stroke-width="0.7"/><path d="M563.6 26V30.6A2.3 1 0 0 0 568.2 30.6V26z" fill="#d8c890" stroke="#8a7a3a" stroke-width="0.6"/><ellipse cx="565.9" cy="26" rx="2.3" ry="1" fill="#f0e4b4" stroke="#8a7a3a" stroke-width="0.5"/><rect x="563.4" y="24.2" width="1.3" height="1.3" fill="#3a3a3a"/><path d="M562.4 38L566 36.2L569.6 38L566 39.8z" fill="#b4a45a" stroke="#5a4e1e" stroke-width="0.7"/><path d="M562.6 44.6L568.8 51" stroke="#c8a080" stroke-width="0.7"/><g opacity="1.0"><path d="M603 29.200000000000003V25.0" stroke="#2a4ac8" stroke-width="1.1"/><path d="M603 23.6L604.4 25.8H601.6z" fill="#2a4ac8"/><path d="M603 29.200000000000003L600 30.8" stroke="#d81e1e" stroke-width="1.1"/><path d="M603 29.200000000000003L606.4 30.6" stroke="#1e9a2e" stroke-width="1.1"/><circle cx="603" cy="29.400000000000002" r="0.9" fill="#222"/></g><g opacity="0.45"><path d="M603 39.0V34.8" stroke="#2a4ac8" stroke-width="1.1"/><path d="M603 33.4L604.4 35.6H601.6z" fill="#2a4ac8"/><path d="M603 39.0L600 40.6" stroke="#d81e1e" stroke-width="1.1"/><path d="M603 39.0L606.4 40.4" stroke="#1e9a2e" stroke-width="1.1"/><circle cx="603" cy="39.199999999999996" r="0.9" fill="#222"/></g><path d="M599.6 40.4L603 38.8L606.6 40.4L603 42z" fill="#f0b0a0" opacity="0.7"/><g opacity="0.5"><path d="M603 49.0V44.8" stroke="#2a4ac8" stroke-width="1.1"/><path d="M603 43.4L604.4 45.6H601.6z" fill="#2a4ac8"/><path d="M603 49.0L600 50.6" stroke="#d81e1e" stroke-width="1.1"/><path d="M603 49.0L606.4 50.4" stroke="#1e9a2e" stroke-width="1.1"/><circle cx="603" cy="49.199999999999996" r="0.9" fill="#222"/></g><rect x="599.6" y="44.4" width="2.4" height="3.4" fill="#a8c890" opacity="0.8"/><path d="M648.6 26.2L651.2 25L653.8 26.2V29.6L651.2 30.8L648.6 29.6z" fill="#d8b878" stroke="#7a5a2a" stroke-width="0.6"/><path d="M648.6 26.2L651.2 27.4L653.8 26.2M651.2 27.4V30.8" stroke="#7a5a2a" stroke-width="0.5" fill="none"/><path d="M647 25V31" stroke="#555" stroke-width="0.6"/><rect x="647" y="36.2" width="7.4" height="2.8" fill="#fff" stroke="#222" stroke-width="0.7"/><rect x="647" y="36.2" width="2.4" height="2.8" fill="#222"/><path d="M688.4 25.4H696M688.4 27.6H696M688.4 29.8H696" stroke="#c87a8a" stroke-width="0.6"/><path d="M690 24.2V31.2M692.2 24.2V31.2M694.4 24.2V31.2" stroke="#6a8ad8" stroke-width="0.6"/><path d="M724 26H730.6M724 28.2H730.6M724 30.4H730.6M725.6 24.2V31.4M727.8 24.2V31.4M730 24.2V31.4" stroke="#6a7ad0" stroke-width="0.55"/><path d="M724.8 24.2V29" stroke="#111" stroke-width="0.7"/><circle cx="724.8" cy="24.6" r="0.9" fill="#111"/><rect x="734.4" y="25.4" width="7.6" height="5.6" fill="#b0b684" stroke="#111" stroke-width="0.8"/><rect x="737.4" y="27.4" width="1.6" height="1.6" fill="#111"/><rect x="723.6" y="36" width="7" height="5.4" fill="#b0b684" stroke="#222" stroke-width="0.8"/><rect x="734.4" y="36" width="7.6" height="5.4" fill="#b0b684" stroke="#222" stroke-width="0.8"/><rect x="737" y="34.8" width="2.4" height="1.4" fill="#222"/><rect x="723.6" y="46" width="7" height="5.4" fill="#b0b684" stroke="#222" stroke-width="0.8"/><rect x="726.2" y="44.6" width="2" height="1.6" fill="#222"/><path d="M735.6 49.4C735 46.6 737.4 45 739.6 46.4" stroke="#222" stroke-width="0.7" fill="none"/><path d="M738.4 48.4H741.4L739.9 50.6z" fill="#111"/><path d="M749.6 45.6L751.4 44.2H756.8L755 45.6z M749.6 45.6H755V47.2H749.6z" fill="#e0585a"/><path d="M749.2 48L751 47.2H756.4L754.6 48.6V50H749.2zM749.2 50.6H754.6L756.4 49.4V51L754.6 52.2H749.2z" fill="#5a86d8"/><path d="M135.2 71.8H137.6V74.60000000000001H135.2zM134.4 74.8H138.4M136.4 74.8V76.8" stroke="#222" stroke-width="0.7" fill="#f0f0f0"/><path d="M142.2 72.60000000000001L145.4 75.8M145.4 72.60000000000001L142.2 75.8" stroke="#222" stroke-width="0.9"/><path d="M135.2 393.70000000000005H137.6V396.5H135.2zM134.4 396.70000000000005H138.4M136.4 396.70000000000005V398.70000000000005" stroke="#222" stroke-width="0.7" fill="#f0f0f0"/><path d="M142.2 394.5L145.4 397.70000000000005M145.4 394.5L142.2 397.70000000000005" stroke="#222" stroke-width="0.9"/><path d="M60.6 434V441.4L62.3 439.8L63.6 442.7L64.7 442.2L63.4 439.4H65.7z" fill="#fff" stroke="#2a2a2e" stroke-width="0.6" stroke-linejoin="round"/><path d="M60.1 433.6V439" stroke="#333" stroke-width="0.5"/><path d="M128.3 27.700000000000003H130.7L129.5 29.0z" fill="#222"/><path d="M210.4 37.7H212.79999999999998L211.6 39.0z" fill="#222"/><path d="M209.8 47.7H212.2L211 49.0z" fill="#222"/><path d="M591.4 27.700000000000003H593.8000000000001L592.6 29.0z" fill="#222"/><path d="M587.0999999999999 37.7H589.5L588.3 39.0z" fill="#222"/><path d="M585.3 47.7H587.7L586.5 49.0z" fill="#222"/><path d="M638.0999999999999 27.700000000000003H640.5L639.3 29.0z" fill="#222"/><path d="M679.0999999999999 27.700000000000003H681.5L680.3 29.0z" fill="#222"/><path d="M714.0 37.7H716.4000000000001L715.2 39.0z" fill="#222"/><path d="M714.0 47.7H716.4000000000001L715.2 49.0z" fill="#222"/><path d="M783.3 27.700000000000003H785.7L784.5 29.0z" fill="#222"/><path d="M783.3 37.7H785.7L784.5 39.0z" fill="#222"/><path d="M635.5999999999999 47.7H638.0L636.8 49.0z" fill="#9a9aa0"/><path d="M171.2 50.8H175.6L173.4 53z" fill="#111"/><circle cx="1175.6" cy="714.5" r="1.5" fill="#f4f4f8" stroke="#8a8a98" stroke-width="0.5"/><path d="M1175.6 713.8V715.4" stroke="#6a6a78" stroke-width="0.5"/><path d="M1233.6 714.6H1236.4" stroke="#333" stroke-width="0.7"/><path d="M9.6 91.8V179.8M16.6 94.8V171.8" stroke="#c4c4c8" stroke-width="0.5" stroke-dasharray="0.6 0.6" fill="none"/><path d="M16.6 99.8H20.6" stroke="#c4c4c8" stroke-width="0.5"/><path d="M16.6 107.8H20.6" stroke="#c4c4c8" stroke-width="0.5"/><path d="M16.6 115.8H20.6" stroke="#c4c4c8" stroke-width="0.5"/><path d="M16.6 123.8H20.6" stroke="#c4c4c8" stroke-width="0.5"/><path d="M16.6 131.8H20.6" stroke="#c4c4c8" stroke-width="0.5"/><path d="M16.6 139.8H20.6" stroke="#c4c4c8" stroke-width="0.5"/><path d="M16.6 147.8H20.6" stroke="#c4c4c8" stroke-width="0.5"/><path d="M16.6 155.8H20.6" stroke="#c4c4c8" stroke-width="0.5"/><path d="M16.6 163.8H20.6" stroke="#c4c4c8" stroke-width="0.5"/><path d="M16.6 171.8H20.6" stroke="#c4c4c8" stroke-width="0.5"/><rect x="1.6" y="82.2" width="3.2" height="3.2" fill="#fff" stroke="#a0a0a6" stroke-width="0.5"/><path d="M2.3000000000000003 83.8H4.1000000000000005" stroke="#555" stroke-width="0.5"/><rect x="8.0" y="90.2" width="3.2" height="3.2" fill="#fff" stroke="#a0a0a6" stroke-width="0.5"/><path d="M8.7 91.8H10.5" stroke="#555" stroke-width="0.5"/><rect x="8.0" y="178.20000000000002" width="3.2" height="3.2" fill="#fff" stroke="#a0a0a6" stroke-width="0.5"/><path d="M8.7 179.8H10.5" stroke="#555" stroke-width="0.5"/><path d="M9.6 178.9V180.70000000000002" stroke="#555" stroke-width="0.5"/><path d="M7.4 81.0H10.4L12 82.39999999999999V86.8H7.4z" fill="#f0fbe8" stroke="#4aa83a" stroke-width="0.9"/><path d="M9.4 80.8V82.8" stroke="#4aa83a" stroke-width="0.7"/><path d="M14 94.39999999999999V91.39999999999999A2.6 2.6 0 0 1 19.2 91.39999999999999V94.39999999999999z" fill="#15151c"/><path d="M15.2 91.6A1.5 1.5 0 0 1 18 91.6" stroke="#3a8ae0" stroke-width="1" fill="none"/><rect x="15.6" y="92.39999999999999" width="2" height="1.2" fill="#e8d84a"/><path d="M21.8 102.39999999999999H25.799999999999997V100.2H24.599999999999998V98.39999999999999H23.2V97.0H25.6" stroke="#1a1a22" stroke-width="1.2" fill="none"/><ellipse cx="23.599999999999998" cy="101.39999999999999" rx="2.4" ry="1.4" fill="#22222a"/><path d="M23.8 105.0L26.2 106.6V109.2L23.8 110.8L21.599999999999998 109.2V106.6z" fill="#3a3a42" stroke="#15151a" stroke-width="0.5"/><path d="M21.599999999999998 106.6L23.8 108.0L26.2 106.6M23.8 108.0V110.8" stroke="#c8c8d0" stroke-width="0.5" fill="none"/><circle cx="23.0" cy="116.6" r="1.5" fill="none" stroke="#1e2aa8" stroke-width="1.1"/><path d="M24.4 117.6L26.4 113.6" stroke="#1e2aa8" stroke-width="1.1"/><path d="M21.2 123.6C22.2 121.2 23.2 121.2 24.0 123.8C24.599999999999998 125.8 25.6 125.39999999999999 26.2 123.39999999999999" stroke="#d81e2a" stroke-width="1.1" fill="none"/><path d="M25.6 121.2V126.2" stroke="#a8141e" stroke-width="0.8"/><rect x="21.599999999999998" y="131.4" width="4.6" height="3" fill="#2a2a32"/><rect x="22.599999999999998" y="129.0" width="2.4" height="2.6" fill="#4a4a5a"/><path d="M21.599999999999998 132.8H26.2" stroke="#c0c0c8" stroke-width="0.4"/><path d="M21.4 138.8L22.599999999999998 137.60000000000002H26.4V141.0L25.2 142.0H21.4z" fill="#6a7a22" stroke="#2a3008" stroke-width="0.6"/><path d="M21.4 138.8H25.2V142.0M25.2 138.8L26.4 137.60000000000002" stroke="#2a3008" stroke-width="0.5" fill="none"/><path d="M21.8 150.4C21.599999999999998 148.4 23.599999999999998 148.8 23.599999999999998 147.0C23.599999999999998 145.4 25.2 145.4 26.2 145.20000000000002" stroke="#1a1a2a" stroke-width="1.1" fill="none"/><rect x="24.4" y="145.4" width="2" height="1.6" fill="#e07aa0"/><circle cx="22.2" cy="150.0" r="0.9" fill="#1a1a2a"/><rect x="21.599999999999998" y="153.0" width="4.8" height="5.6" rx="0.8" fill="#d8d0b4" stroke="#6a6a72" stroke-width="0.6"/><path d="M21.599999999999998 154.60000000000002H26.4" stroke="#6a6a72" stroke-width="0.6"/><rect x="22.8" y="155.4" width="2.4" height="2.2" fill="#8a8a92"/><rect x="21.7" y="161.20000000000002" width="4.6" height="5" fill="#f4f4f8" stroke="#c01e2e" stroke-width="0.9"/><path d="M22.599999999999998 165.20000000000002L23.8 163.4L24.599999999999998 164.4L25.6 162.4" stroke="#3a3a8a" stroke-width="0.5" fill="none"/><circle cx="23.0" cy="170.60000000000002" r="1.7" fill="#d82a2a"/><circle cx="23.599999999999998" cy="172.20000000000002" r="1.9" fill="#2a9a3a"/><circle cx="25.2" cy="173.4" r="1.6" fill="#1a2ac0"/><path d="M14.2 177.8H16.2L16.8 178.60000000000002H19.2V182.4H14.2z" fill="#ecdc5a" stroke="#b49a2a" stroke-width="0.5"/><path d="M14.2 179.4H19.2" stroke="#f8f0a8" stroke-width="0.6"/><path d="M154 76.5V194.18M163.2 85.86V156.74M181.2 104.58V138.01999999999998M190 106.58V130.66M190 144.01999999999998V149.38M172.4 87.86V91.22" stroke="#c4c4c8" stroke-width="0.6" fill="none"/><path d="M154 74.5H160" stroke="#c4c4c8" stroke-width="0.6"/><path d="M163.2 83.86H169" stroke="#c4c4c8" stroke-width="0.6"/><path d="M172.4 93.22H178" stroke="#c4c4c8" stroke-width="0.6"/><path d="M181.2 102.58H187" stroke="#c4c4c8" stroke-width="0.6"/><path d="M190 111.94H196.5" stroke="#c4c4c8" stroke-width="0.6"/><path d="M190 121.3H196.5" stroke="#c4c4c8" stroke-width="0.6"/><path d="M190 130.66H196.5" stroke="#c4c4c8" stroke-width="0.6"/><path d="M181.2 140.01999999999998H187" stroke="#c4c4c8" stroke-width="0.6"/><path d="M190 149.38H196.5" stroke="#c4c4c8" stroke-width="0.6"/><path d="M163.2 158.74H169" stroke="#c4c4c8" stroke-width="0.6"/><path d="M172.4 168.1H178" stroke="#c4c4c8" stroke-width="0.6"/><path d="M154 177.45999999999998H160" stroke="#c4c4c8" stroke-width="0.6"/><path d="M154 186.82H160" stroke="#c4c4c8" stroke-width="0.6"/><path d="M154 196.18H160" stroke="#c4c4c8" stroke-width="0.6"/><rect x="152.4" y="72.9" width="3.2" height="3.2" fill="#fff" stroke="#a0a0a6" stroke-width="0.5"/><path d="M153.1 74.5H154.9" stroke="#555" stroke-width="0.5"/><rect x="161.6" y="82.26" width="3.2" height="3.2" fill="#fff" stroke="#a0a0a6" stroke-width="0.5"/><path d="M162.29999999999998 83.86H164.1" stroke="#555" stroke-width="0.5"/><rect x="170.8" y="91.62" width="3.2" height="3.2" fill="#fff" stroke="#a0a0a6" stroke-width="0.5"/><path d="M171.5 93.22H173.3" stroke="#555" stroke-width="0.5"/><rect x="179.6" y="100.98" width="3.2" height="3.2" fill="#fff" stroke="#a0a0a6" stroke-width="0.5"/><path d="M180.29999999999998 102.58H182.1" stroke="#555" stroke-width="0.5"/><rect x="188.4" y="119.7" width="3.2" height="3.2" fill="#fff" stroke="#a0a0a6" stroke-width="0.5"/><path d="M189.1 121.3H190.9" stroke="#555" stroke-width="0.5"/><path d="M190 120.39999999999999V122.2" stroke="#555" stroke-width="0.5"/><rect x="179.6" y="138.42" width="3.2" height="3.2" fill="#fff" stroke="#a0a0a6" stroke-width="0.5"/><path d="M180.29999999999998 140.01999999999998H182.1" stroke="#555" stroke-width="0.5"/><rect x="161.6" y="157.14000000000001" width="3.2" height="3.2" fill="#fff" stroke="#a0a0a6" stroke-width="0.5"/><path d="M162.29999999999998 158.74H164.1" stroke="#555" stroke-width="0.5"/><rect x="170.8" y="166.5" width="3.2" height="3.2" fill="#fff" stroke="#a0a0a6" stroke-width="0.5"/><path d="M171.5 168.1H173.3" stroke="#555" stroke-width="0.5"/><path d="M172.4 167.2V169.0" stroke="#555" stroke-width="0.5"/><rect x="152.4" y="175.85999999999999" width="3.2" height="3.2" fill="#fff" stroke="#a0a0a6" stroke-width="0.5"/><path d="M153.1 177.45999999999998H154.9" stroke="#555" stroke-width="0.5"/><path d="M154 176.55999999999997V178.35999999999999" stroke="#555" stroke-width="0.5"/><rect x="152.4" y="185.22" width="3.2" height="3.2" fill="#fff" stroke="#a0a0a6" stroke-width="0.5"/><path d="M153.1 186.82H154.9" stroke="#555" stroke-width="0.5"/><path d="M154 185.92V187.72" stroke="#555" stroke-width="0.5"/><rect x="152.4" y="194.58" width="3.2" height="3.2" fill="#fff" stroke="#a0a0a6" stroke-width="0.5"/><path d="M153.1 196.18H154.9" stroke="#555" stroke-width="0.5"/><path d="M154 195.28V197.08" stroke="#555" stroke-width="0.5"/><path d="M162.9 71.7L165.3 73.3V75.9L162.9 77.5L160.70000000000002 75.9V73.3z" fill="#3a3a42" stroke="#15151a" stroke-width="0.5"/><path d="M160.70000000000002 73.3L162.9 74.7L165.3 73.3M162.9 74.7V77.5" stroke="#c8c8d0" stroke-width="0.5" fill="none"/><path d="M169.6 85.06L171.6 82.46H174.4L172.4 85.06z" fill="#3a3238"/><path d="M170.79999999999998 84.26L172.0 83.06H173.2" stroke="#d8d0d4" stroke-width="0.4" fill="none"/><path d="M187.8 103.78L189.8 101.17999999999999H192.60000000000002L190.60000000000002 103.78z" fill="#3a3238"/><path d="M189.0 102.98L190.20000000000002 101.78H191.4" stroke="#d8d0d4" stroke-width="0.4" fill="none"/><path d="M187.8 141.21999999999997L189.8 138.61999999999998H192.60000000000002L190.60000000000002 141.21999999999997z" fill="#3a3238"/><path d="M189.0 140.42L190.20000000000002 139.21999999999997H191.4" stroke="#d8d0d4" stroke-width="0.4" fill="none"/><path d="M178.4 93.42L180 90.82H184.2L182.6 93.42z" fill="#d81e2a"/><path d="M178.2 95.82L179.6 93.42H184L182.6 95.82z" fill="#1e3ac8"/><rect x="197.10000000000002" y="110.03999999999999" width="3.8" height="3.8" rx="0.9" fill="#e4dc3a" stroke="#1a1a1a" stroke-width="0.8"/><rect x="197.10000000000002" y="119.39999999999999" width="3.8" height="3.8" rx="0.9" fill="#e4dc3a" stroke="#1a1a1a" stroke-width="0.8"/><path d="M197.8 121.3H200.20000000000002" stroke="#1a1a1a" stroke-width="0.7"/><rect x="197.10000000000002" y="128.76" width="3.8" height="3.8" rx="0.9" fill="#e4dc3a" stroke="#1a1a1a" stroke-width="0.8"/><path d="M199.0 128.46L201.20000000000002 132.85999999999999H199.0z" fill="#1a1a1a"/><rect x="197.10000000000002" y="147.48" width="3.8" height="3.8" rx="0.9" fill="#e4dc3a" stroke="#1a1a1a" stroke-width="0.8"/><rect x="169.6" y="157.74" width="4.4" height="1.8" fill="#c8c8cc" stroke="#5a5a62" stroke-width="0.6"/><rect x="178.8" y="167.1" width="4.4" height="1.8" fill="#e8e8ec" stroke="#2a2a32" stroke-width="0.7"/><path d="M161 174.85999999999999V179.65999999999997H165.6M161 179.65999999999997L164.4 176.26" stroke="#2a2a32" stroke-width="0.7" fill="none"/><path d="M160.4 187.42L162 184.82H165.8L164.2 187.42z" fill="#2a2a32"/><path d="M160.4 189.22L161.6 187.62H165.4L164.2 189.22z" fill="#5a5a62"/><path d="M160.4 197.98000000000002L162.4 194.58H165.8L163.8 197.98000000000002z" fill="#c83a4a" stroke="#6a1a22" stroke-width="0.5"/><path d="M161.6 196.78H164.4" stroke="#fff" stroke-width="0.5"/></svg></div>
<div id="tx" style="position:absolute;left:0;top:0;width:1280px;height:720px;will-change:transform;">
<span class="t" style="left:10.4px;top:0.90px;font-size:6.51px;color:#111;transform:scaleX(0.9094);-webkit-text-stroke:0.2px #111;">ANSYS Electronics Desktop 2020 R1 - Project - Maxwell3DDesign1 - 3D Modeler - [Project - Maxwell3DDesign1 - Modeler]</span>
<span class="t" style="left:12.5px;top:11.50px;font-size:6.51px;color:#111;transform:scaleX(0.8107);-webkit-text-stroke:0.2px #111;">File</span>
<span class="t" style="left:26px;top:11.50px;font-size:6.51px;color:#111;transform:scaleX(0.8926);-webkit-text-stroke:0.2px #111;">Edit</span>
<span class="t" style="left:40.7px;top:11.50px;font-size:6.51px;color:#111;transform:scaleX(0.8796);-webkit-text-stroke:0.2px #111;">View</span>
<span class="t" style="left:57.7px;top:11.50px;font-size:6.51px;color:#111;transform:scaleX(0.8797);-webkit-text-stroke:0.2px #111;">Project</span>
<span class="t" style="left:80.5px;top:11.50px;font-size:6.51px;color:#111;transform:scaleX(0.8898);-webkit-text-stroke:0.2px #111;">Draw</span>
<span class="t" style="left:98.7px;top:11.50px;font-size:6.51px;color:#111;transform:scaleX(0.9368);-webkit-text-stroke:0.2px #111;">Modeler</span>
<span class="t" style="left:125.5px;top:11.50px;font-size:6.51px;color:#111;transform:scaleX(0.8990);-webkit-text-stroke:0.2px #111;">Maxwell 3D</span>
<span class="t" style="left:160px;top:11.50px;font-size:6.51px;color:#111;transform:scaleX(0.9021);-webkit-text-stroke:0.2px #111;">Tools</span>
<span class="t" style="left:178.5px;top:11.50px;font-size:6.51px;color:#111;transform:scaleX(0.9600);-webkit-text-stroke:0.2px #111;">Window</span>
<span class="t" style="left:205.5px;top:11.50px;font-size:6.51px;color:#111;transform:scaleX(0.8972);-webkit-text-stroke:0.2px #111;">Help</span>
<span class="t" style="left:6px;top:58.30px;font-size:6.51px;color:#333;transform:scaleX(0.8382);">Desktop</span>
<span class="t" style="left:36px;top:58.30px;font-size:6.51px;color:#333;transform:scaleX(0.8581);">View</span>
<span class="t" style="left:57px;top:58.30px;font-size:6.51px;color:#2a6aa8;transform:scaleX(0.8568);">Draw</span>
<span class="t" style="left:80px;top:58.30px;font-size:6.51px;color:#333;transform:scaleX(0.9030);">Model</span>
<span class="t" style="left:106px;top:58.30px;font-size:6.51px;color:#333;transform:scaleX(0.8893);">Simulation</span>
<span class="t" style="left:144px;top:58.30px;font-size:6.51px;color:#333;transform:scaleX(0.7839);">Results</span>
<span class="t" style="left:171px;top:58.30px;font-size:6.51px;color:#333;transform:scaleX(0.9425);">Automation</span>
<span class="t" style="left:6px;top:40.30px;font-size:6.51px;color:#1a1a1a;transform:scaleX(0.8093);-webkit-text-stroke:0.16px #1a1a1a;">Save</span>
<span class="t" style="left:32.6px;top:23.20px;font-size:6.51px;color:#9a9aa0;transform:scaleX(0.8296);">Cut</span>
<span class="t" style="left:32px;top:33.20px;font-size:6.51px;color:#9a9aa0;transform:scaleX(0.8560);">Copy</span>
<span class="t" style="left:32px;top:43.20px;font-size:6.51px;color:#1a1a1a;transform:scaleX(0.7820);-webkit-text-stroke:0.16px #1a1a1a;">Paste</span>
<span class="t" style="left:57px;top:23.20px;font-size:6.51px;color:#1a1a1a;transform:scaleX(0.9005);-webkit-text-stroke:0.16px #1a1a1a;">Undo</span>
<span class="t" style="left:57px;top:33.20px;font-size:6.51px;color:#9a9aa0;transform:scaleX(0.8169);">Redo</span>
<span class="t" style="left:57px;top:43.20px;font-size:6.51px;color:#1a1a1a;transform:scaleX(0.8512);-webkit-text-stroke:0.16px #1a1a1a;">Delete</span>
<span class="t" style="left:79px;top:23.20px;font-size:6.51px;color:#1a1a1a;transform:scaleX(0.8553);-webkit-text-stroke:0.16px #1a1a1a;">Select:</span>
<span class="t" style="left:97.5px;top:23.20px;font-size:6.51px;color:#1a1a1a;transform:scaleX(0.8778);-webkit-text-stroke:0.16px #1a1a1a;">Object</span>
<span class="t" style="left:88px;top:33.20px;font-size:6.51px;color:#1a1a1a;transform:scaleX(0.8716);-webkit-text-stroke:0.16px #1a1a1a;">Select by Name</span>
<span class="t" style="left:165px;top:40.30px;font-size:6.51px;color:#1a1a1a;transform:scaleX(0.8722);-webkit-text-stroke:0.16px #1a1a1a;">Zoom</span>
<span class="t" style="left:191.5px;top:23.20px;font-size:6.51px;color:#1a1a1a;transform:scaleX(0.8205);-webkit-text-stroke:0.16px #1a1a1a;">Pan</span>
<span class="t" style="left:191.5px;top:33.20px;font-size:6.51px;color:#1a1a1a;transform:scaleX(0.8613);-webkit-text-stroke:0.16px #1a1a1a;">Rotate</span>
<span class="t" style="left:191.5px;top:43.20px;font-size:6.51px;color:#1a1a1a;transform:scaleX(0.9038);-webkit-text-stroke:0.16px #1a1a1a;">Orient</span>
<span class="t" style="left:228px;top:23.20px;font-size:6.51px;color:#1a1a1a;transform:scaleX(0.9430);-webkit-text-stroke:0.16px #1a1a1a;">Fit All</span>
<span class="t" style="left:228px;top:33.20px;font-size:6.51px;color:#9a9aa0;transform:scaleX(0.8448);">Fit Selected</span>
<span class="t" style="left:377px;top:23.20px;font-size:6.51px;color:#9a9aa0;transform:scaleX(0.8173);">Move</span>
<span class="t" style="left:377px;top:33.20px;font-size:6.51px;color:#9a9aa0;transform:scaleX(0.8352);">Rotate</span>
<span class="t" style="left:377px;top:43.20px;font-size:6.51px;color:#9a9aa0;transform:scaleX(0.8250);">Mirror</span>
<span class="t" style="left:408px;top:23.20px;font-size:6.51px;color:#9a9aa0;transform:scaleX(0.8785);">Along Line</span>
<span class="t" style="left:408px;top:33.20px;font-size:6.51px;color:#9a9aa0;transform:scaleX(0.8649);">Around Axis</span>
<span class="t" style="left:408px;top:43.20px;font-size:6.51px;color:#9a9aa0;transform:scaleX(0.9023);">Thru Mirror</span>
<span class="t" style="left:453px;top:23.20px;font-size:6.51px;color:#9a9aa0;transform:scaleX(0.8889);">Unite</span>
<span class="t" style="left:453px;top:33.20px;font-size:6.51px;color:#9a9aa0;transform:scaleX(0.8671);">Subtract</span>
<span class="t" style="left:453px;top:43.20px;font-size:6.51px;color:#9a9aa0;transform:scaleX(0.8822);">Intersect</span>
<span class="t" style="left:486.5px;top:23.20px;font-size:6.51px;color:#9a9aa0;transform:scaleX(0.8691);">Split</span>
<span class="t" style="left:486.5px;top:33.20px;font-size:6.51px;color:#9a9aa0;transform:scaleX(0.9308);">Imprint</span>
<span class="t" style="left:535px;top:23.20px;font-size:6.51px;color:#9a9aa0;transform:scaleX(0.8373);">Fillet</span>
<span class="t" style="left:535px;top:33.20px;font-size:6.51px;color:#9a9aa0;transform:scaleX(0.8421);">Chamfer</span>
<span class="t" style="left:570.5px;top:23.20px;font-size:6.51px;color:#1a1a1a;transform:scaleX(0.8703);-webkit-text-stroke:0.28px #1a1a1a;">Surface</span>
<span class="t" style="left:570.5px;top:33.20px;font-size:6.51px;color:#1a1a1a;transform:scaleX(0.8529);-webkit-text-stroke:0.28px #1a1a1a;">Sheet</span>
<span class="t" style="left:570.5px;top:43.20px;font-size:6.51px;color:#1a1a1a;transform:scaleX(0.8230);-webkit-text-stroke:0.28px #1a1a1a;">Edge</span>
<span class="t" style="left:608.5px;top:23.20px;font-size:6.51px;color:#1a1a1a;transform:scaleX(0.7720);-webkit-text-stroke:0.28px #1a1a1a;">Relative CS</span>
<span class="t" style="left:608.5px;top:33.20px;font-size:6.51px;color:#9a9aa0;transform:scaleX(0.7511);">Face CS</span>
<span class="t" style="left:608.5px;top:43.20px;font-size:6.51px;color:#9a9aa0;transform:scaleX(0.8439);">Object CS</span>
<span class="t" style="left:656px;top:23.20px;font-size:6.51px;color:#1a1a1a;transform:scaleX(0.8301);-webkit-text-stroke:0.16px #1a1a1a;">Measure</span>
<span class="t" style="left:656px;top:33.20px;font-size:6.51px;color:#1a1a1a;transform:scaleX(0.8362);-webkit-text-stroke:0.16px #1a1a1a;">Ruler</span>
<span class="t" style="left:647px;top:43.20px;font-size:6.51px;color:#1a1a1a;transform:scaleX(0.8776);-webkit-text-stroke:0.16px #1a1a1a;">Units</span>
<span class="t" style="left:697.5px;top:23.20px;font-size:6.51px;color:#1a1a1a;transform:scaleX(0.8142);-webkit-text-stroke:0.16px #1a1a1a;">Grid</span>
<span class="t" style="left:688px;top:33.20px;font-size:6.51px;color:#1a1a1a;transform:scaleX(0.6919);-webkit-text-stroke:0.16px #1a1a1a;">XY</span>
<span class="t" style="left:688px;top:43.20px;font-size:6.51px;color:#1a1a1a;transform:scaleX(0.7820);-webkit-text-stroke:0.16px #1a1a1a;">3D</span>
<span class="t" style="left:749.5px;top:23.20px;font-size:6.51px;color:#1a1a1a;transform:scaleX(0.9030);-webkit-text-stroke:0.16px #1a1a1a;">Model</span>
<span class="t" style="left:749.5px;top:33.20px;font-size:6.51px;color:#1a1a1a;transform:scaleX(0.8785);-webkit-text-stroke:0.16px #1a1a1a;">vacuum</span>
<span class="t" style="left:758px;top:43.20px;font-size:6.51px;color:#9a9aa0;transform:scaleX(0.9081);">Material</span>
<span class="t" style="left:2px;top:69.40px;font-size:6.51px;color:#222;transform:scaleX(0.8595);">Project Manager</span>
<span class="t" style="left:2px;top:391.30px;font-size:6.51px;color:#222;transform:scaleX(0.8439);">Properties</span>
<span class="t" style="left:1.8px;top:710.30px;font-size:6.62px;color:#111;transform:scaleX(0.8629);-webkit-text-stroke:0.2px #111;">Nothing is selected</span>
<span class="t" style="left:1181px;top:710.10px;font-size:6.51px;color:#111;transform:scaleX(0.8038);-webkit-text-stroke:0.2px #111;">Show 1 Messages</span>
<span class="t" style="left:1240px;top:710.10px;font-size:6.51px;color:#111;transform:scaleX(0.7940);-webkit-text-stroke:0.2px #111;">Show Progress</span>
<span class="t" style="left:4.2px;top:699.10px;font-size:6.08px;color:#111;transform:scaleX(0.8486);">Command</span>
<span class="t" style="left:14px;top:78.90px;font-size:6.73px;color:#111;font-weight:700;transform:scaleX(0.8856);">Project*</span>
<span class="t" style="left:21px;top:86.90px;font-size:6.73px;color:#111;font-weight:700;transform:scaleX(0.8625);">Maxwell3DDesign1 (EddyCurrent)*</span>
<span class="t" style="left:27.5px;top:94.90px;font-size:6.29px;color:#111;transform:scaleX(0.8482);-webkit-text-stroke:0.2px #111;">3D Components</span>
<span class="t" style="left:27.5px;top:102.90px;font-size:6.29px;color:#111;transform:scaleX(0.8475);-webkit-text-stroke:0.2px #111;">Model</span>
<span class="t" style="left:27.5px;top:110.90px;font-size:6.29px;color:#111;transform:scaleX(0.8338);-webkit-text-stroke:0.2px #111;">Boundaries</span>
<span class="t" style="left:27.5px;top:118.90px;font-size:6.29px;color:#111;transform:scaleX(0.8395);-webkit-text-stroke:0.2px #111;">Excitations</span>
<span class="t" style="left:27.5px;top:126.90px;font-size:6.29px;color:#111;transform:scaleX(0.8162);-webkit-text-stroke:0.2px #111;">Parameters</span>
<span class="t" style="left:27.5px;top:134.90px;font-size:6.29px;color:#111;transform:scaleX(0.8130);-webkit-text-stroke:0.2px #111;">Mesh</span>
<span class="t" style="left:27.5px;top:142.90px;font-size:6.29px;color:#111;transform:scaleX(0.8550);-webkit-text-stroke:0.2px #111;">Analysis</span>
<span class="t" style="left:27.5px;top:150.90px;font-size:6.29px;color:#111;transform:scaleX(0.8657);-webkit-text-stroke:0.2px #111;">Optimetrics</span>
<span class="t" style="left:27.5px;top:158.90px;font-size:6.29px;color:#111;transform:scaleX(0.8113);-webkit-text-stroke:0.2px #111;">Results</span>
<span class="t" style="left:27.5px;top:166.90px;font-size:6.29px;color:#111;transform:scaleX(0.8342);-webkit-text-stroke:0.2px #111;">Field Overlays</span>
<span class="t" style="left:21px;top:174.90px;font-size:6.29px;color:#111;transform:scaleX(0.8524);-webkit-text-stroke:0.2px #111;">Definitions</span>
<span class="t" style="left:167.7px;top:69.60px;font-size:6.73px;color:#111;transform:scaleX(0.8901);-webkit-text-stroke:0.2px #111;">Model</span>
<span class="t" style="left:176.4px;top:78.96px;font-size:6.73px;color:#111;transform:scaleX(0.8519);-webkit-text-stroke:0.2px #111;">Solids</span>
<span class="t" style="left:185.4px;top:88.32px;font-size:6.73px;color:#111;transform:scaleX(0.8754);-webkit-text-stroke:0.2px #111;">vacuum</span>
<span class="t" style="left:194.5px;top:97.68px;font-size:6.73px;color:#111;transform:scaleX(0.8453);-webkit-text-stroke:0.2px #111;">Cylinder1</span>
<span class="t" style="left:203.3px;top:107.04px;font-size:6.73px;color:#111;transform:scaleX(0.8524);-webkit-text-stroke:0.2px #111;">CreateCylinder</span>
<span class="t" style="left:203.3px;top:116.40px;font-size:6.73px;color:#111;transform:scaleX(0.8869);-webkit-text-stroke:0.2px #111;">Subtract</span>
<span class="t" style="left:203.3px;top:125.76px;font-size:6.73px;color:#111;transform:scaleX(0.8877);-webkit-text-stroke:0.2px #111;">SectionTo</span>
<span class="t" style="left:194.5px;top:135.12px;font-size:6.73px;color:#111;transform:scaleX(0.8630);-webkit-text-stroke:0.2px #111;">Cylinder3</span>
<span class="t" style="left:203.3px;top:144.48px;font-size:6.73px;color:#111;transform:scaleX(0.8524);-webkit-text-stroke:0.2px #111;">CreateCylinder</span>
<span class="t" style="left:176.4px;top:153.84px;font-size:6.73px;color:#111;transform:scaleX(0.8173);-webkit-text-stroke:0.2px #111;">Sheets</span>
<span class="t" style="left:185.4px;top:163.20px;font-size:6.73px;color:#111;transform:scaleX(0.8427);-webkit-text-stroke:0.2px #111;">Cylinder1_Section1</span>
<span class="t" style="left:167.7px;top:172.56px;font-size:6.73px;color:#111;transform:scaleX(0.8645);-webkit-text-stroke:0.2px #111;">Coordinate Systems</span>
<span class="t" style="left:167.7px;top:181.92px;font-size:6.73px;color:#111;transform:scaleX(0.7933);-webkit-text-stroke:0.2px #111;">Planes</span>
<span class="t" style="left:167.7px;top:191.28px;font-size:6.73px;color:#111;transform:scaleX(0.7810);-webkit-text-stroke:0.2px #111;">Lists</span>
<span class="t" style="left:7px;top:403.70px;font-size:6.18px;color:#222;transform:scaleX(0.8562);-webkit-text-stroke:0.12px #222;">Name</span>
<span class="t" style="left:53.9px;top:403.70px;font-size:6.18px;color:#222;transform:scaleX(0.9003);-webkit-text-stroke:0.12px #222;">Value</span>
<span class="t" style="left:99.8px;top:403.70px;font-size:6.18px;color:#222;transform:scaleX(0.8376);-webkit-text-stroke:0.12px #222;">Unit</span>
<span class="t" style="left:112.5px;top:403.70px;font-size:6.18px;color:#222;transform:scaleX(0.7869);-webkit-text-stroke:0.12px #222;">Evaluated ...</span>
<span class="t" style="left:4.1px;top:413.29px;font-size:6.18px;color:#222;transform:scaleX(0.7887);-webkit-text-stroke:0.12px #222;">Comm...</span>
<span class="t" style="left:25.2px;top:413.29px;font-size:6.18px;color:#222;transform:scaleX(0.8404);-webkit-text-stroke:0.12px #222;">CreateCylinder</span>
<span class="t" style="left:4.1px;top:422.36px;font-size:6.18px;color:#222;transform:scaleX(0.7887);-webkit-text-stroke:0.12px #222;">Coordi...</span>
<span class="t" style="left:25.2px;top:422.36px;font-size:6.18px;color:#222;transform:scaleX(0.8743);-webkit-text-stroke:0.12px #222;">Global</span>
<span class="t" style="left:4.1px;top:431.43px;font-size:6.18px;color:#222;transform:scaleX(0.7887);-webkit-text-stroke:0.12px #222;">Center...</span>
<span class="t" style="left:97.9px;top:431.43px;font-size:6.18px;color:#222;transform:scaleX(0.8449);-webkit-text-stroke:0.12px #222;">mm</span>
<span class="t" style="left:112.9px;top:431.43px;font-size:6.18px;color:#222;transform:scaleX(0.7977);-webkit-text-stroke:0.12px #222;">7.4mm , 2...</span>
<span class="t" style="left:4.1px;top:440.50px;font-size:6.18px;color:#222;transform:scaleX(0.8139);-webkit-text-stroke:0.12px #222;">Axis</span>
<span class="t" style="left:4.1px;top:449.57px;font-size:6.18px;color:#222;transform:scaleX(0.8585);-webkit-text-stroke:0.12px #222;">Radius</span>
<span class="t" style="left:25.2px;top:449.57px;font-size:6.18px;color:#222;transform:scaleX(0.8227);-webkit-text-stroke:0.12px #222;">11.0344913379307</span>
<span class="t" style="left:97.9px;top:449.57px;font-size:6.18px;color:#222;transform:scaleX(0.8449);-webkit-text-stroke:0.12px #222;">mm</span>
<span class="t" style="left:112.9px;top:449.57px;font-size:6.18px;color:#222;transform:scaleX(0.8542);-webkit-text-stroke:0.12px #222;">11.03449...</span>
<span class="t" style="left:4.1px;top:458.64px;font-size:6.18px;color:#222;transform:scaleX(0.8687);-webkit-text-stroke:0.12px #222;">Height</span>
<span class="t" style="left:25.2px;top:458.64px;font-size:6.18px;color:#222;transform:scaleX(0.8844);-webkit-text-stroke:0.12px #222;">0.8</span>
<span class="t" style="left:97.9px;top:458.64px;font-size:6.18px;color:#222;transform:scaleX(0.8449);-webkit-text-stroke:0.12px #222;">mm</span>
<span class="t" style="left:112.9px;top:458.64px;font-size:6.18px;color:#222;transform:scaleX(0.8477);-webkit-text-stroke:0.12px #222;">0.8mm</span>
<span class="t" style="left:4.1px;top:467.71px;font-size:6.18px;color:#222;transform:scaleX(0.8515);-webkit-text-stroke:0.12px #222;">Numb...</span>
<span class="t" style="left:25.2px;top:467.71px;font-size:6.18px;color:#222;transform:scaleX(0.7855);-webkit-text-stroke:0.12px #222;">0</span>
<span class="t" style="left:112.9px;top:467.71px;font-size:6.18px;color:#222;transform:scaleX(0.7273);-webkit-text-stroke:0.12px #222;">0</span>
<span class="t" style="left:25.2px;top:431.40px;font-size:6.18px;color:#111;transform:scaleX(0.9027);">0,0,dist_offset</span>
<span class="t" style="left:26.4px;top:443.50px;font-size:6.84px;color:#333;transform:scaleX(0.8677);">dist_offset</span>
</div>
</body></html>
